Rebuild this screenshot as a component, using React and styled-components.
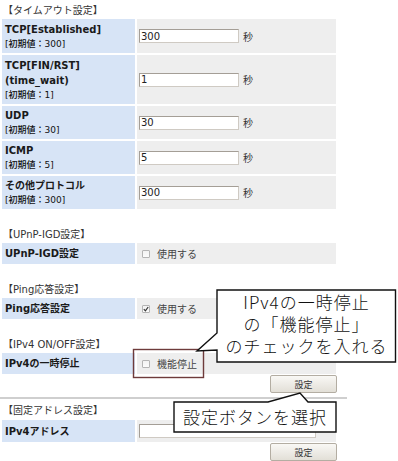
import React from 'react'
import styled, { createGlobalStyle } from 'styled-components'

const GlobalStyle = createGlobalStyle`
  body {
    margin: 0;
    background: #fff;
  }
  * {
    box-sizing: border-box;
  }
`

const Page = styled.div`
  position: relative;
  width: 398px;
  height: 461px;
  overflow: hidden;
  padding: 3px 0 0 2px;
  font-family: "DejaVu Sans", "Noto Sans CJK JP", sans-serif;
  color: #222;
`

const Heading = styled.div`
  height: 16px;
  line-height: 16px;
  font-size: 10px;
  color: #333;
  padding-left: 1px;
  margin-top: ${({ $mt = 0 }) => $mt}px;
`

const Table = styled.div`
  width: 334px;
  display: flex;
  flex-direction: column;
  gap: 2px;
  margin-top: ${({ $mt = 0 }) => $mt}px;
`

const Row = styled.div`
  display: grid;
  grid-template-columns: 133px 199px;
  column-gap: 2px;
  height: ${({ $h }) => $h}px;
`

const Label = styled.div`
  background: #d7e4f6;
  padding: 0 3px;
  display: flex;
  flex-direction: column;
  justify-content: center;
`

const LabelMain = styled.span`
  font-weight: bold;
  font-size: 10px;
  line-height: 15px;
  color: #1a1a1a;
`

const Default = styled.span`
  font-size: 9px;
  line-height: 14px;
  font-weight: 500;
  color: #111;
`

const Value = styled.div`
  background: #eee;
  display: flex;
  align-items: center;
  padding-left: 2px;
  gap: 4px;
`

const TextInput = styled.input`
  width: ${({ $w }) => $w}px;
  height: 14px;
  border: 1px solid;
  border-color: #a49e96 #cfcac3 #cfcac3 #a49e96;
  font: 10px "DejaVu Sans", sans-serif;
  padding: 0 1px;
  background: #fff;
  color: #222;
  outline: none;
`

const Unit = styled.span`
  font-size: 10px;
  color: #333;
`

const CheckLabel = styled.span`
  display: flex;
  align-items: center;
  gap: 7px;
  margin-left: 3px;
  font-size: 10px;
  color: #444;
`

const Box = styled.span`
  width: 8px;
  height: 8px;
  border: 1px solid #b4b4b4;
  border-radius: 1px;
  background: linear-gradient(#f2f2f2, #fbfbfb);
  display: flex;
  align-items: center;
  justify-content: center;
`

const ButtonRow = styled.div`
  width: 335px;
  display: flex;
  justify-content: flex-end;
  margin-top: 1px;
`

const Button = styled.button`
  width: 67px;
  height: 18px;
  padding: 0;
  border: 1px solid #b3ada2;
  border-radius: 2px;
  background: linear-gradient(#f9f8f5, #e2dfd7);
  font: 9px "Noto Sans CJK JP", sans-serif;
  color: #333;
`

const Separator = styled.div`
  margin: 4px 0 0 -2px;
  width: 347px;
  height: 2px;
  background: #cfcfcf;
`

const Overlay = styled.svg`
  position: absolute;
  left: 0;
  top: 0;
  pointer-events: none;
`

const CalloutText = styled.div`
  position: absolute;
  left: ${({ $x }) => $x}px;
  top: ${({ $y }) => $y}px;
  width: ${({ $w }) => $w}px;
  display: flex;
  flex-direction: column;
  align-items: center;
  font-family: "Noto Sans CJK JP", sans-serif;
  font-weight: 300;
  font-size: 17px;
  letter-spacing: 1px;
  color: #111;
  white-space: nowrap;
`

const CalloutLine = styled.span`
  display: block;
  height: ${({ $h = 22 }) => $h}px;
  line-height: ${({ $h = 22 }) => $h}px;
`

const CheckBox = ({ checked }) => (
  <Box>
    {checked && (
      <svg width="6" height="6" viewBox="0 0 6 6">
        <path d="M0.8 3.2 L2.4 4.8 L5.2 1" fill="none" stroke="#333" strokeWidth="1.2" />
      </svg>
    )}
  </Box>
)

const TimeRow = ({ h, label, initial, value }) => (
  <Row $h={h}>
    <Label>
      {label.map((l) => <LabelMain key={l}>{l}</LabelMain>)}
      <Default>[初期値：{initial}]</Default>
    </Label>
    <Value>
      <TextInput $w={100} defaultValue={value} />
      <Unit>秒</Unit>
    </Value>
  </Row>
)

const timeouts = [
  { h: 34, label: ['TCP[Established]'], initial: '300', value: '300' },
  { h: 49, label: ['TCP[FIN/RST]', '(time_wait)'], initial: '1', value: '1' },
  { h: 33, label: ['UDP'], initial: '30', value: '30' },
  { h: 33, label: ['ICMP'], initial: '5', value: '5' },
  { h: 33, label: ['その他プロトコル'], initial: '300', value: '300' },
]

const App = () => (
  <Page>
    <GlobalStyle />
    <Heading>【タイムアウト設定】</Heading>
    <Table>
      {timeouts.map((t) => <TimeRow key={t.label[0]} {...t} />)}
    </Table>

    <Heading $mt={18}>【UPnP-IGD設定】</Heading>
    <Table>
      <Row $h={21}>
        <Label><LabelMain>UPnP-IGD設定</LabelMain></Label>
        <Value>
          <CheckLabel><CheckBox />使用する</CheckLabel>
        </Value>
      </Row>
    </Table>

    <Heading $mt={18}>【Ping応答設定】</Heading>
    <Table>
      <Row $h={21}>
        <Label><LabelMain>Ping応答設定</LabelMain></Label>
        <Value>
          <CheckLabel><CheckBox checked />使用する</CheckLabel>
        </Value>
      </Row>
    </Table>

    <Heading $mt={18}>【IPv4 ON/OFF設定】</Heading>
    <Table>
      <Row $h={21}>
        <Label><LabelMain>IPv4の一時停止</LabelMain></Label>
        <Value>
          <CheckLabel><CheckBox />機能停止</CheckLabel>
        </Value>
      </Row>
    </Table>
    <ButtonRow><Button>設定</Button></ButtonRow>

    <Separator />

    <Heading $mt={4}>【固定アドレス設定】</Heading>
    <Table $mt={1}>
      <Row $h={22}>
        <Label><LabelMain>IPv4アドレス</LabelMain></Label>
        <Value>
          <TextInput $w={177} defaultValue="" />
        </Value>
      </Row>
    </Table>
    <ButtonRow><Button>設定</Button></ButtonRow>

    <Overlay width="398" height="461" viewBox="0 0 398 461">
      <rect x="133.5" y="349.5" width="70" height="28" fill="none" stroke="#6e3b3b" strokeWidth="1.4" />
      <polygon
        points="217,290 395.5,290 395.5,362 217,362 217,350 197,351 217,333"
        fill="#fff"
        stroke="#111"
        strokeWidth="1.4"
        strokeLinejoin="miter"
      />
      <polygon
        points="174,402 268,402 300,393 308,402 336,402 336,432 174,432"
        fill="#fff"
        stroke="#111"
        strokeWidth="1.4"
      />
    </Overlay>
    <CalloutText $x={217} $y={291} $w={179}>
      <CalloutLine>IPv4の一時停止</CalloutLine>
      <CalloutLine>の「機能停止」</CalloutLine>
      <CalloutLine>のチェックを入れる</CalloutLine>
    </CalloutText>
    <CalloutText $x={174} $y={404} $w={162}>
      <CalloutLine $h={26}>設定ボタンを選択</CalloutLine>
    </CalloutText>
  </Page>
)

export default App
